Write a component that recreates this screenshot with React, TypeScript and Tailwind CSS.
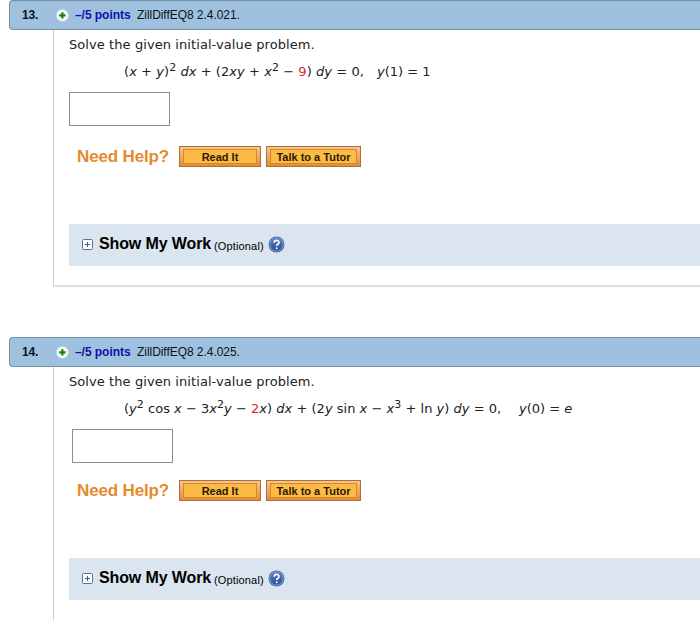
import type { ReactNode } from "react";

const verdana = "font-['DejaVu_Sans',sans-serif]";
const arial = "font-['Liberation_Sans',sans-serif]";

type QuestionProps = {
  num: number;
  code: string;
  equation: ReactNode;
  bodyClass: string;
  inputClass: string;
  helpClass: string;
};

export default function App() {
  return (
    <div className={`h-[620px] w-[700px] overflow-hidden bg-white text-black ${arial}`}>
      <Question
        num={13}
        code="ZillDiffEQ8 2.4.021."
        bodyClass="h-[257px] border-b-2 border-b-[#dedede]"
        inputClass="mt-3"
        helpClass="mt-5"
        equation={
          <>
            <Part width="w-[253px] tracking-[0.06px]">
              (<i>x</i> + <i>y</i>)<Sup>2</Sup> <i>dx</i> + (2<i>xy</i> + <i>x</i><Sup>2</Sup> − <Red>9</Red>) <i>dy</i> = 0,
            </Part>
            <Part width="w-[60px]"><i>y</i>(1) = 1</Part>
          </>
        }
      />
      <div className="h-[50px]" />
      <Question
        num={14}
        code="ZillDiffEQ8 2.4.025."
        bodyClass="h-[253px]"
        inputClass="mt-3 ml-[3px]"
        helpClass="mt-[17px]"
        equation={
          <>
            <Part width="w-[395px] tracking-[0.02px]">
              (<i>y</i><Sup>2</Sup> cos <i>x</i> − 3<i>x</i><Sup>2</Sup><i>y</i> − <Red>2</Red><i>x</i>) <i>dx</i> + (2<i>y</i> sin <i>x</i> − <i>x</i><Sup>3</Sup> + ln <i>y</i>) <i>dy</i> = 0,
            </Part>
            <Part width="w-[60px]"><i>y</i>(0) = <i>e</i></Part>
          </>
        }
      />
    </div>
  );
}

function Question({ num, code, equation, bodyClass, inputClass, helpClass }: QuestionProps) {
  return (
    <section>
      <header className="ml-[9px] flex h-[30px] items-center rounded-l-[4px] border border-r-0 border-[#7890a3] bg-[#9dc1df] text-[12px] leading-[15px]">
        <span className="ml-3 w-[33px] font-bold tracking-[-0.2px] text-[#111]">{num}.</span>
        <PlusBadge />
        <span className="ml-[6px] w-[62px] whitespace-nowrap font-bold tracking-[-0.05px] text-[#1111a8]">–/5 points</span>
        <span className="whitespace-nowrap text-[#111] tracking-[-0.05px]">{code}</span>
      </header>

      <div className={`ml-[53px] border-l border-l-[#cfcfcf] pl-[15px] ${bodyClass}`}>
        <p className={`pt-[7px] text-[13px] leading-4 tracking-[0.08px] text-[#222] ${verdana}`}>
          Solve the given initial-value problem.
        </p>
        <div className={`mt-[11px] ml-[55px] flex whitespace-nowrap text-[13px] leading-4 text-[#222] ${verdana}`}>
          {equation}
        </div>
        <input
          aria-label={`Answer ${num}`}
          className={`block h-[34px] w-[101px] border border-[#8c8c8c] bg-white px-1 text-sm outline-none ${inputClass}`}
        />

        <div className={`ml-2 flex h-[21px] items-center ${helpClass}`}>
          <span className="w-[102px] whitespace-nowrap text-[17px] leading-5 font-bold tracking-[-0.15px] text-[#e58a2c]">
            Need Help?
          </span>
          <HelpButton className="mr-[5px] w-[82px]">Read It</HelpButton>
          <HelpButton className="w-[95px]">Talk to a Tutor</HelpButton>
        </div>

        <div className="mt-[57px] flex h-[42px] items-center bg-[#dae5ef] pb-0.5 pl-[13px]">
          <ExpandIcon />
          <span className="ml-1.5 w-[115px] whitespace-nowrap text-[16px] leading-5 font-bold tracking-[-0.12px]">Show My Work</span>
          <span className="w-[54px] whitespace-nowrap pt-1 text-[11px] leading-4 tracking-[0.15px]">(Optional)</span>
          <QuestionIcon />
        </div>
      </div>
    </section>
  );
}

function Part({ width, children }: { width: string; children: ReactNode }) {
  return <span className={`shrink-0 ${width}`}>{children}</span>;
}

function Sup({ children }: { children: ReactNode }) {
  return <sup className="top-[-5px] text-[11px] leading-none">{children}</sup>;
}

function Red({ children }: { children: ReactNode }) {
  return <span className="text-[#e0252b]">{children}</span>;
}

function HelpButton({ className, children }: { className: string; children: ReactNode }) {
  return (
    <button
      className={`flex h-[21px] border border-[#a8703a] bg-linear-to-b from-[#f9c48c] to-[#e98a2c] px-[3px] py-0.5 ${className}`}
    >
      <span className="flex h-[15px] w-full items-center justify-center whitespace-nowrap border border-[#d08a35] bg-[#fdbb45] text-[11px] leading-3 font-bold text-[#2a1a05]">
        {children}
      </span>
    </button>
  );
}

function PlusBadge() {
  return (
    <svg className="shrink-0" width="14" height="14" viewBox="0 0 14 14">
      <circle cx="7.4" cy="7.4" r="6.1" fill="#f8faf6" stroke="#c3cfd4" strokeWidth="0.8" />
      <path d="M7.4 4.2v6.4M4.2 7.4h6.4" stroke="#168016" strokeWidth="2.2" />
    </svg>
  );
}

function ExpandIcon() {
  return (
    <svg className="shrink-0" width="11" height="11" viewBox="0 0 11 11">
      <rect x="0.5" y="0.5" width="10" height="10" rx="1" fill="#fbfcfe" stroke="#56749c" />
      <path d="M5.5 3v5M3 5.5h5" stroke="#405c86" />
    </svg>
  );
}

function QuestionIcon() {
  return (
    <svg className="mt-px shrink-0" width="17" height="17" viewBox="0 0 17 17">
      <defs>
        <linearGradient id="helpBlue" x1="0" y1="0" x2="0" y2="1">
          <stop offset="0%" stopColor="#5b7fbd" />
          <stop offset="100%" stopColor="#274f96" />
        </linearGradient>
      </defs>
      <circle cx="8.5" cy="8.5" r="8" fill="#446fae" />
      <circle cx="8.5" cy="8.5" r="6.6" fill="url(#helpBlue)" stroke="#8fabd3" strokeWidth="0.8" />
      <path d="M6.1 6.7c.1-3.1 4.9-3 4.9-.2 0 1.7-2.3 1.8-2.3 3.5" fill="none" stroke="#fff" strokeWidth="1.7" />
      <circle cx="8.7" cy="12.2" r="1" fill="#fff" />
    </svg>
  );
}
